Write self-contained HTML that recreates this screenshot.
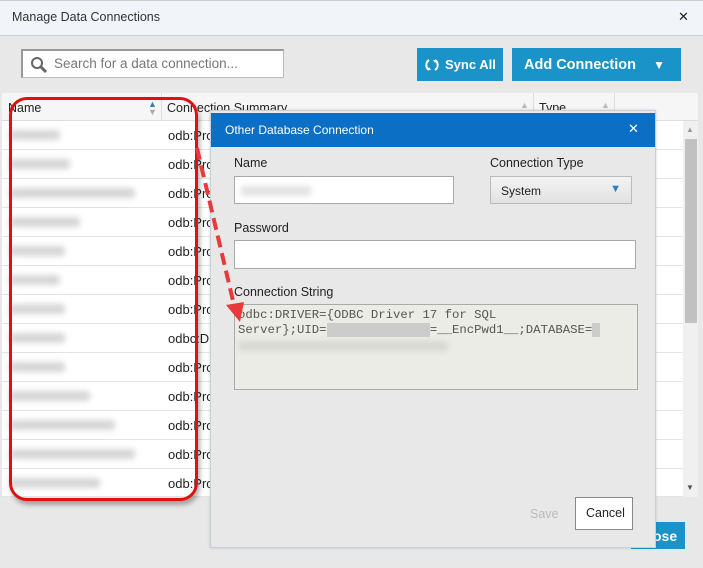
<!DOCTYPE html>
<html><head><meta charset="utf-8"><style>
*{box-sizing:border-box}
body{margin:0;width:703px;height:568px;overflow:hidden;background:#e8e8e8;font-family:"Liberation Sans","DejaVu Sans",sans-serif;font-size:12.5px;color:#222;position:relative}
.abs{position:absolute}
.title{left:0;top:0;width:703px;height:36px;background:#f1f4f9;border-top:1px solid #ccc;border-bottom:1px solid #cfcfcf}
.btn{background:#1a94c8;color:#fff;font-weight:bold;font-size:13.5px;display:flex;align-items:center}
.row{position:absolute;left:2px;width:681px;height:29px;background:#fff;border-bottom:1px solid #e4e4e4}
.row span{position:absolute;left:166px;top:7px;font-size:13px}
.blur{position:absolute;left:8px;top:9px;height:10px;background:#d6d6d6;filter:blur(3px);border-radius:3px}
.inp{position:absolute;background:#fff;border:1px solid #aaa}
.lbl{position:absolute;font-size:12.5px;color:#222}
</style></head><body>
<div class="abs title"><div class="abs" style="left:12px;top:9px;font-size:12.5px;color:#333">Manage Data Connections</div>
<div class="abs" style="left:678px;top:8px;font-weight:bold;font-size:13px">✕</div></div>

<div class="abs" style="left:21px;top:49px;width:263px;height:29px;background:#fff;border:1px solid #bbb;border-left:2px solid #999;border-top:2px solid #999">
<svg class="abs" style="left:7px;top:5px" width="18" height="18"><circle cx="7" cy="7" r="5" fill="none" stroke="#666" stroke-width="2"/><line x1="11" y1="11" x2="16" y2="16" stroke="#666" stroke-width="3"/></svg>
<div class="abs" style="left:31px;top:5px;color:#777;font-size:13.5px">Search for a data connection...</div></div>

<div class="abs btn" style="left:417px;top:48px;width:86px;height:33px;padding-left:7px;font-size:13px">
<svg width="16" height="16" style="margin-right:5px"><path d="M5 3 A6 6 0 0 0 5 13" fill="none" stroke="#fff" stroke-width="2"/><path d="M11 3 A6 6 0 0 1 11 13" fill="none" stroke="#fff" stroke-width="2"/><path d="M3 13 L7 13 L5 10Z M13 3 L9 3 L11 6Z" fill="#fff"/></svg>Sync All</div>
<div class="abs btn" style="left:512px;top:48px;width:169px;height:33px;padding-left:12px;font-size:14.5px">Add Connection<span style="position:absolute;right:16px;font-size:12px">▼</span></div>

<div class="abs" style="left:2px;top:93px;width:696px;height:28px;background:#f6f6f6;border-bottom:1px solid #ddd"></div>
<div class="abs" style="left:161px;top:93px;width:1px;height:28px;background:#ddd"></div>
<div class="abs" style="left:533px;top:93px;width:1px;height:28px;background:#ddd"></div>
<div class="abs" style="left:614px;top:93px;width:1px;height:28px;background:#ddd"></div>
<div class="abs" style="left:8px;top:101px">Name</div>
<div class="abs" style="left:148px;top:100px;color:#3a7fb0;font-size:9px;line-height:8px">▲<br><span style="color:#aaa">▼</span></div>
<div class="abs" style="left:167px;top:101px">Connection Summary</div>
<div class="abs" style="left:520px;top:100px;color:#bbb;font-size:9px">▲</div>
<div class="abs" style="left:539px;top:101px">Type</div>
<div class="abs" style="left:601px;top:100px;color:#bbb;font-size:9px">▲</div>

<div class="row" style="top:121px"><i class="blur" style="width:50px"></i><span>odb:Pro</span></div>
<div class="row" style="top:150px"><i class="blur" style="width:60px"></i><span>odb:Pro</span></div>
<div class="row" style="top:179px"><i class="blur" style="width:125px"></i><span>odb:Pro</span></div>
<div class="row" style="top:208px"><i class="blur" style="width:70px"></i><span>odb:Pro</span></div>
<div class="row" style="top:237px"><i class="blur" style="width:55px"></i><span>odb:Pro</span></div>
<div class="row" style="top:266px"><i class="blur" style="width:50px"></i><span>odb:Pro</span></div>
<div class="row" style="top:295px"><i class="blur" style="width:55px"></i><span>odb:Pro</span></div>
<div class="row" style="top:324px"><i class="blur" style="width:55px"></i><span>odbc:DF</span></div>
<div class="row" style="top:353px"><i class="blur" style="width:55px"></i><span>odb:Pro</span></div>
<div class="row" style="top:382px"><i class="blur" style="width:80px"></i><span>odb:Pro</span></div>
<div class="row" style="top:411px"><i class="blur" style="width:105px"></i><span>odb:Pro</span></div>
<div class="row" style="top:440px"><i class="blur" style="width:125px"></i><span>odb:Pro</span></div>
<div class="row" style="top:469px;height:28px"><i class="blur" style="width:90px"></i><span>odb:Pro</span></div>
<div class="abs" style="left:683px;top:121px;width:15px;height:376px;background:#f0f0f0"></div>
<div class="abs" style="left:685px;top:139px;width:12px;height:184px;background:#c1c1c1"></div>
<div class="abs" style="left:686px;top:125px;font-size:8px;color:#999">▲</div>
<div class="abs" style="left:686px;top:483px;font-size:8px;color:#555">▼</div>

<div class="abs btn" style="left:631px;top:522px;width:54px;height:27px;padding-left:22px;font-size:14px">ose</div>

<div class="abs" style="left:210px;top:110px;width:446px;height:438px;background:#e8e8e8;border:1px solid #c4d0e0;box-shadow:0 0 3px rgba(0,0,0,.15)">
<div class="abs" style="left:0;top:2px;width:444px;height:34px;background:#0b6fc6;color:#fff">
<div class="abs" style="left:14px;top:10px;font-size:12px">Other Database Connection</div>
<div class="abs" style="left:417px;top:8px;font-weight:bold;font-size:13px">✕</div></div>
</div>
<div class="lbl" style="left:234px;top:156px">Name</div>
<div class="inp" style="left:234px;top:176px;width:220px;height:28px"><i class="blur" style="left:6px;top:9px;width:70px;background:#e2e2e2"></i></div>
<div class="lbl" style="left:490px;top:156px">Connection Type</div>
<div class="inp" style="left:490px;top:176px;width:142px;height:28px;background:linear-gradient(#f3f3f3,#e2e2e2);border-color:#bbb"><span class="abs" style="left:10px;top:7px;font-size:12px">System</span><span class="abs" style="right:10px;top:6px;color:#2a7fc0;font-size:11px">▼</span></div>
<div class="lbl" style="left:234px;top:221px">Password</div>
<div class="inp" style="left:234px;top:240px;width:402px;height:29px"></div>
<div class="lbl" style="left:234px;top:285px">Connection String</div>
<div class="inp" style="left:234px;top:304px;width:404px;height:86px;background:#ecece6;border-color:#aaa;font-family:'Liberation Mono',monospace;font-size:12.3px;color:#555;padding:3px 0 0 3px;line-height:15px">odbc:DRIVER={ODBC Driver 17 for SQL<br>Server};UID=<span style="background:#ccc;color:#ccc">xxxxxxxxxxxxxx</span>=__EncPwd1__;DATABASE=<span style="background:#ccc">&nbsp;</span>
<i class="blur" style="left:3px;top:36px;width:210px;background:#d8d8d2"></i></div>
<div class="lbl" style="left:530px;top:507px;color:#bbb">Save</div>
<div class="abs" style="left:575px;top:497px;width:58px;height:33px;background:#fff;border:1px solid #888;padding:8px 0 0 10px">Cancel</div>

<div class="abs" style="left:9px;top:97px;width:189px;height:404px;border:3px solid #e01010;border-radius:18px;box-shadow:2px 4px 5px rgba(0,0,0,.3)"></div>
<svg class="abs" style="left:0;top:0" width="703" height="568"><line x1="197" y1="148" x2="234" y2="305" stroke="#e83a3a" stroke-width="4" stroke-dasharray="12,6"/><path d="M226 305 L244 302 L240 322Z" fill="#e83a3a"/></svg>
</body></html>
